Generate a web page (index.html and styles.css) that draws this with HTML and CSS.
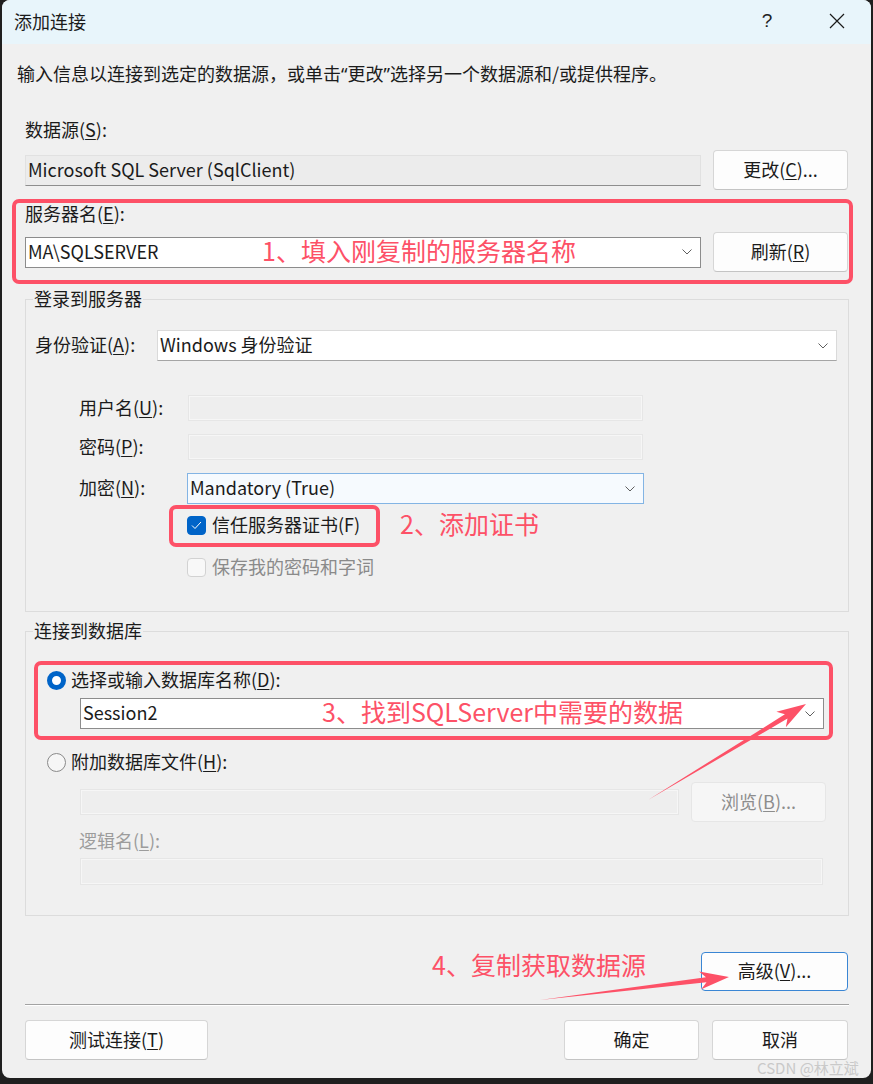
FILE: index.html
```html
<!DOCTYPE html>
<html lang="zh-CN">
<head>
<meta charset="utf-8">
<title>添加连接</title>
<link rel="stylesheet" href="styles.css">
</head>
<body>
<div class="window">
  <div class="titlebar">
    <span class="title">添加连接</span>
    <span class="help">?</span>
    <span class="close"><svg width="16" height="16" viewBox="0 0 16 16"><path d="M1 1L15 15M15 1L1 15" stroke="#1a1a1a" stroke-width="1.2" fill="none"/></svg></span>
  </div>
  <div class="body">
    <p class="intro">输入信息以连接到选定的数据源，或单击<span class="q">“</span>更改<span class="q">”</span>选择另一个数据源和/或提供程序。</p>

    <div class="label lbl-ds">数据源(<u>S</u>):</div>
    <div class="row row-ds">
      <div class="readonly">Microsoft SQL Server (SqlClient)</div>
      <button class="btn btn-side">更改(<u>C</u>)...</button>
    </div>

    <div class="label lbl-server">服务器名(<u>E</u>):</div>
    <div class="row row-server">
      <div class="combo combo-server"><span class="val">MA\SQLSERVER</span><svg class="chev" width="10" height="6" viewBox="0 0 10 6"><path d="M0.5 0.5L5 5L9.5 0.5" stroke="#5f5f5f" fill="none"/></svg></div>
      <button class="btn btn-side">刷新(<u>R</u>)</button>
    </div>

    <div class="group group-login">
      <div class="legend">登录到服务器</div>
      <div class="auth-row">
        <span class="auth-label">身份验证(<u>A</u>):</span>
        <div class="combo combo-auth"><span class="val">Windows 身份验证</span><svg class="chev" width="10" height="6" viewBox="0 0 10 6"><path d="M0.5 0.5L5 5L9.5 0.5" stroke="#5f5f5f" fill="none"/></svg></div>
      </div>
      <div class="form-row row-user">
        <span class="form-label">用户名(<u>U</u>):</span>
        <div class="textbox tb-short"></div>
      </div>
      <div class="form-row row-pass">
        <span class="form-label">密码(<u>P</u>):</span>
        <div class="textbox tb-short"></div>
      </div>
      <div class="form-row row-enc">
        <span class="form-label enc-label">加密(<u>N</u>):</span>
        <div class="combo combo-enc"><span class="val">Mandatory (True)</span><svg class="chev" width="10" height="6" viewBox="0 0 10 6"><path d="M0.5 0.5L5 5L9.5 0.5" stroke="#5f5f5f" fill="none"/></svg></div>
      </div>
      <div class="check-row cb-trust">
        <span class="checkbox checked"><svg width="11" height="9" viewBox="0 0 11 9"><path d="M1 4.5L4 7.5L10 1" stroke="#fff" stroke-width="1" fill="none"/></svg></span>
        <span class="ctext">信任服务器证书(F)</span>
      </div>
      <div class="check-row cb-save disabled">
        <span class="checkbox"></span>
        <span class="ctext">保存我的密码和字词</span>
      </div>
    </div>

    <div class="group group-db">
      <div class="legend">连接到数据库</div>
      <div class="radio-row radio-1">
        <span class="radio checked"></span>
        <span class="ctext">选择或输入数据库名称(<u>D</u>):</span>
      </div>
      <div class="combo combo-db"><span class="val">Session2</span><svg class="chev" width="10" height="6" viewBox="0 0 10 6"><path d="M0.5 0.5L5 5L9.5 0.5" stroke="#5f5f5f" fill="none"/></svg></div>
      <div class="radio-row radio-2">
        <span class="radio"></span>
        <span class="ctext">附加数据库文件(<u>H</u>):</span>
      </div>
      <div class="attach-row">
        <div class="textbox tb-attach"></div>
        <button class="btn btn-disabled">浏览(<u>B</u>)...</button>
      </div>
      <div class="label lbl-logical">逻辑名(<u>L</u>):</div>
      <div class="textbox tb-logical"></div>
    </div>

    <div class="adv-row">
      <button class="btn btn-adv">高级(<u>V</u>)...</button>
    </div>
    <div class="separator"></div>
    <div class="bottom-row">
      <button class="btn btn-test">测试连接(<u>T</u>)</button>
      <div class="spacer"></div>
      <button class="btn btn-ok">确定</button>
      <button class="btn btn-cancel">取消</button>
    </div>
  </div>
</div>

<div class="annotations">
  <div class="redbox box-1"></div>
  <div class="redbox box-2"></div>
  <div class="redbox box-3"></div>
  <div class="note note-1">1、填入刚复制的服务器名称</div>
  <div class="note note-2">2、添加证书</div>
  <div class="note note-3">3、找到SQLServer中需要的数据</div>
  <div class="note note-4">4、复制获取数据源</div>
  <svg class="arrows" width="873" height="1084" viewBox="0 0 873 1084">
    <polygon fill="#fd5167" points="648,800 787.5,718.5 785.8,727.2 806,704 776.4,711.8 784.9,714.3"/>
    <polygon fill="#fd5167" points="540,1000 706.5,982.2 701.3,989.3 729,977 699.1,971.5 705.9,977.2"/>
  </svg>
  <div class="watermark">CSDN @林立斌</div>
</div>
</body>
</html>
```

FILE: styles.css
```css
* { box-sizing: border-box; }

html, body {
  margin: 0;
  padding: 0;
}

body {
  width: 873px;
  height: 1084px;
  overflow: hidden;
  position: relative;
  background: #1f1f1f;
  font-family: "Noto Sans CJK SC", "Noto Sans", sans-serif;
  font-size: 18px;
  line-height: 24px;
  color: #1b1b1b;
}

u { text-decoration: underline; text-underline-offset: 2px; text-decoration-thickness: 1px; }

.window {
  margin-left: 2px;
  width: 869px;
  height: 1078px;
  background: #f0f0f0;
  border-radius: 8px;
  overflow: hidden;
  display: flex;
  flex-direction: column;
}

.titlebar {
  height: 44px;
  flex: none;
  background: #e8f5fb;
  display: flex;
  align-items: center;
  padding: 0 11px 2px 12px;
}
.title { flex: 1; }
.help {
  width: 30px;
  text-align: center;
  font-family: "Liberation Sans", sans-serif;
  font-size: 19px;
  color: #222;
  margin-right: 32px;
}
.close {
  width: 46px;
  height: 42px;
  display: flex;
  align-items: center;
  justify-content: center;
}

.body {
  padding: 0 22px 0 23px;
  display: flex;
  flex-direction: column;
}

.intro {
  margin: 17px 0 0 -8px;
  line-height: 24px;
  white-space: nowrap;
}
.q { font-family: "Noto Sans", sans-serif; }

.label { line-height: 24px; }
.lbl-ds { margin-top: 31px; }
.lbl-server { margin-top: 11px; }

.row {
  display: flex;
  align-items: center;
  gap: 12px;
  height: 40px;
}
.row-ds { margin-top: 9px; }
.row-server { margin-top: 7px; }

.readonly {
  width: 676px;
  height: 31px;
  background: #ececec;
  border: 1px solid #e1e1e1;
  border-bottom-color: #8e8e8e;
  padding: 0 0 3px 2px;
  display: flex;
  align-items: center;
}

.combo {
  height: 31px;
  background: #fff;
  border: 1px solid #8c8c8c;
  display: flex;
  align-items: center;
  padding: 0 8px 0 2px;
}
.combo .val { flex: 1; white-space: nowrap; margin-top: -3px; }
.combo .chev { flex: none; }
.combo-server { width: 676px; }

.btn {
  font: inherit;
  color: inherit;
  background: #fdfdfd;
  border: 1px solid #d6d6d6;
  border-bottom-color: #c4c4c4;
  border-radius: 4px;
  padding: 0 0 3px;
  display: flex;
  align-items: center;
  justify-content: center;
  line-height: 24px;
}
.btn-side { width: 135px; height: 40px; }

.group {
  border: 1px solid #dcdcdc;
  display: flex;
  flex-direction: column;
  align-items: flex-start;
}
.legend {
  margin: -14px 0 0 7px;
  padding: 0 1px;
  background: #f0f0f0;
  line-height: 24px;
}
.group-login { margin-top: 27px; height: 313px; }
.group-db { margin-top: 19px; height: 285px; }

.auth-row {
  margin: 20px 11px 0 9px;
  align-self: stretch;
  display: flex;
  align-items: center;
}
.auth-label { width: 122px; margin-top: -3px; }
.combo-auth {
  flex: 1;
  border-color: #dadada;
  border-bottom-color: #a5a5a5;
}

.form-row {
  margin-left: 53px;
  display: flex;
  align-items: center;
}
.form-label { width: 109px; margin-top: -3px; }
.enc-label { width: 108px; }
.row-user { margin-top: 34px; }
.row-pass { margin-top: 13px; }
.row-enc { margin-top: 13px; }

.textbox {
  height: 26px;
  background: #eeeeee;
  border: 1px solid #e6e6e6;
  box-shadow: inset 0 0 0 1px #f6f6f6;
}
.tb-short { width: 455px; }

.combo-enc {
  width: 457px;
  background: #f6fafe;
  border-color: #83b4e4;
}

.check-row {
  display: flex;
  align-items: center;
  gap: 6px;
  margin-left: 161px;
  height: 24px;
  line-height: 24px;
}
.ctext { margin-top: -3px; }
.cb-trust { margin-top: 9px; }
.cb-save { margin-top: 18px; color: #8a8a8a; }

.checkbox {
  width: 19px;
  height: 19px;
  border-radius: 4px;
  background: #f8f8f8;
  border: 1px solid #d2d2d2;
  display: flex;
  align-items: center;
  justify-content: center;
}
.checkbox.checked {
  background: #0064c8;
  border-color: #0064c8;
}

.radio-row {
  display: flex;
  align-items: center;
  gap: 5px;
  margin-left: 21px;
  height: 24px;
  line-height: 24px;
}
.radio-1 { margin-top: 26px; }
.radio-2 { margin-top: 21px; }

.radio {
  width: 19px;
  height: 19px;
  border-radius: 50%;
  border: 1px solid #8a8a8a;
  background: #f6f6f6;
  flex: none;
}
.radio.checked {
  border: 5px solid #0064c8;
  background: #fff;
}

.combo-db {
  margin: 6px 0 0 54px;
  width: 744px;
}

.attach-row {
  margin: 8px 0 0 54px;
  display: flex;
  align-items: center;
  gap: 12px;
  height: 40px;
}
.tb-attach { width: 599px; }
.btn-disabled {
  width: 135px;
  height: 40px;
  background: #f6f6f6;
  border-color: #e6e6e6;
  color: #8d8d8d;
}

.lbl-logical { margin: 6px 0 0 53px; color: #9c9c9c; }
.tb-logical { margin: 6px 0 0 54px; width: 743px; height: 27px; }

.adv-row {
  margin-top: 36px;
  display: flex;
  justify-content: flex-end;
  padding-right: 1px;
}
.btn-adv {
  width: 147px;
  height: 39px;
  border-color: #3a86d4;
}

.separator {
  margin-top: 13px;
  height: 2px;
  border-top: 1px solid #a3a3a3;
  border-bottom: 1px solid #ffffff;
}

.bottom-row {
  margin-top: 14px;
  display: flex;
  align-items: center;
  gap: 13px;
  padding-right: 1px;
}
.bottom-row .spacer { flex: 1; }
.btn-test { width: 183px; height: 40px; }
.btn-ok { width: 135px; height: 40px; }
.btn-cancel { width: 136px; height: 40px; }

/* annotations overlay */
.annotations {
  position: absolute;
  left: 0;
  top: 0;
  width: 873px;
  height: 1084px;
  pointer-events: none;
}
.redbox {
  position: absolute;
  border: 4px solid #fd5167;
  border-radius: 7px;
}
.box-1 { left: 12px; top: 199px; width: 841px; height: 85px; }
.box-2 { left: 169px; top: 505px; width: 211px; height: 42px; }
.box-3 { left: 34px; top: 661px; width: 799px; height: 79px; }

.note {
  position: absolute;
  color: #fd5167;
  font-size: 25px;
  line-height: 30px;
  white-space: nowrap;
}
.note-1 { left: 262px; top: 235px; }
.note-2 { left: 400px; top: 508px; }
.note-3 { left: 322px; top: 696px; }
.note-4 { left: 432px; top: 949px; }

.arrows { position: absolute; left: 0; top: 0; }

.watermark {
  position: absolute;
  left: 757px;
  top: 1058px;
  font-size: 15px;
  line-height: 20px;
  color: #c9c9c9;
  white-space: nowrap;
}
```
